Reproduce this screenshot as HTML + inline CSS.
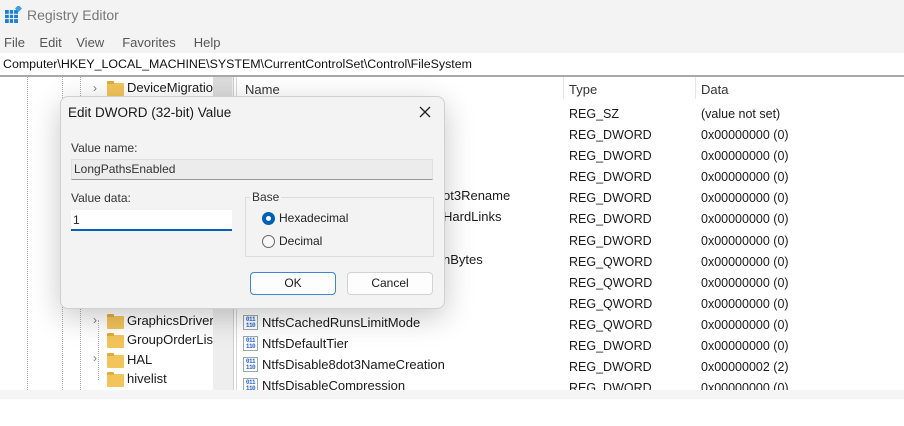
<!DOCTYPE html>
<html><head><meta charset="utf-8"><style>
*{margin:0;padding:0;box-sizing:border-box}
body{width:904px;height:426px;background:#fff;font-family:"Liberation Sans",sans-serif;position:relative;overflow:hidden;color:#1a1a1a}
.a{position:absolute;white-space:nowrap}
.t{font-size:13px}
.f{position:absolute;width:17px;height:13px;background:#f2c45a;border-radius:1px}
.f:before{content:"";position:absolute;left:0;top:-2px;width:7px;height:3px;background:#e3ab3a;border-radius:1px 1px 0 0}
.chev{position:absolute;font-size:12px;color:#777}
.ic{position:absolute;width:15px;height:15px;border:1px solid #9aa;background:#fff;font:bold 6px/6px "Liberation Mono",monospace;color:#2962c9;text-align:center;padding-top:1px;letter-spacing:-0.5px}
.dl{position:absolute;border-left:1px dotted #aaa}
</style></head><body>
<div class="a" style="left:0;top:0;width:904px;height:31px;background:#f3f3f3"></div>
<svg class="a" style="left:4px;top:6px" width="18" height="18" viewBox="0 0 18 18"><rect x="1" y="4" width="13" height="13" fill="#1f7fd1"/><g stroke="#f3f3f3" stroke-width="1"><line x1="5.3" y1="4" x2="5.3" y2="17"/><line x1="9.6" y1="4" x2="9.6" y2="17"/><line x1="1" y1="8.3" x2="14" y2="8.3"/><line x1="1" y1="12.6" x2="14" y2="12.6"/></g><rect x="12" y="0" width="5" height="5" fill="#3aa0e8" transform="rotate(45 14.5 2.5)"/></svg>
<div class="a" style="left:27px;top:7px;font-size:14px;color:#777">Registry Editor</div>
<div class="a" style="left:0;top:31px;width:904px;height:22px;background:#f3f3f3"></div>
<div class="a" style="left:4px;top:35px;font-size:13px;color:#555">File&nbsp;&nbsp;&nbsp;&nbsp;Edit&nbsp;&nbsp;&nbsp;&nbsp;View&nbsp;&nbsp;&nbsp;&nbsp;&nbsp;Favorites&nbsp;&nbsp;&nbsp;&nbsp;&nbsp;Help</div>
<div class="a" style="left:3px;top:57px;font-size:12.4px;color:#111">Computer\HKEY_LOCAL_MACHINE\SYSTEM\CurrentControlSet\Control\FileSystem</div>
<div class="a" style="left:0;top:75px;width:904px;height:2px;background:#a8a8a8"></div>
<div class="dl" style="left:27px;top:77px;height:313px"></div>
<div class="dl" style="left:62px;top:77px;height:313px"></div>
<div class="dl" style="left:80px;top:77px;height:313px"></div>
<div class="dl" style="left:98px;top:320px;height:60px"></div>
<div class="a" style="left:213px;top:77px;width:20px;height:313px;background:#eeeeee"></div>
<div class="a" style="left:213px;top:77px;width:19px;height:20px;background:#dcdcdc"></div>
<div class="a" style="left:233px;top:77px;width:1px;height:313px;background:#cfcfcf"></div>
<div class="a" style="left:236px;top:77px;width:1px;height:313px;background:#d8d8d8"></div>
<span class="chev" style="left:93px;top:81px">&#x203A;</span><div class="f" style="left:107px;top:83px"></div><div class="a t" style="left:127px;top:80px;width:86px;overflow:hidden">DeviceMigration</div>
<span class="chev" style="left:93px;top:313px">&#x203A;</span><div class="f" style="left:107px;top:316px"></div><div class="a t" style="left:127px;top:313px;width:86px;overflow:hidden">GraphicsDrivers</div>
<div class="f" style="left:107px;top:335px"></div><div class="a t" style="left:127px;top:332px;width:86px;overflow:hidden">GroupOrderList</div>
<span class="chev" style="left:93px;top:351px">&#x203A;</span><div class="f" style="left:107px;top:355px"></div><div class="a t" style="left:127px;top:352px">HAL</div>
<div class="f" style="left:107px;top:374px"></div><div class="a t" style="left:127px;top:371px">hivelist</div>
<div class="a t" style="left:245px;top:82px;color:#333">Name</div>
<div class="a" style="left:563px;top:77px;width:1px;height:22px;background:#e5e5e5"></div>
<div class="a t" style="left:569px;top:82px;color:#333">Type</div>
<div class="a" style="left:695px;top:77px;width:1px;height:22px;background:#e5e5e5"></div>
<div class="a t" style="left:701px;top:82px;color:#333">Data</div>
<div class="a" style="left:569px;top:104px;font-size:12.5px;line-height:21.1px">REG_SZ<br>REG_DWORD<br>REG_DWORD<br>REG_DWORD<br>REG_DWORD<br>REG_DWORD<br>REG_DWORD<br>REG_QWORD<br>REG_QWORD<br>REG_QWORD<br>REG_QWORD<br>REG_DWORD<br>REG_DWORD<br>REG_DWORD</div>
<div class="a" style="left:701px;top:104px;font-size:12.5px;line-height:21.1px">(value not set)<br>0x00000000 (0)<br>0x00000000 (0)<br>0x00000000 (0)<br>0x00000000 (0)<br>0x00000000 (0)<br>0x00000000 (0)<br>0x00000000 (0)<br>0x00000000 (0)<br>0x00000000 (0)<br>0x00000000 (0)<br>0x00000000 (0)<br>0x00000002 (2)<br>0x00000000 (0)</div>
<div class="a t" style="left:443px;top:188px">ot3Rename</div>
<div class="a t" style="left:443px;top:209px">HardLinks</div>
<div class="a t" style="left:443px;top:252px">nBytes</div>
<div class="ic" style="left:243px;top:315px">011<br>110</div><div class="a t" style="left:262px;top:315px">NtfsCachedRunsLimitMode</div>
<div class="ic" style="left:243px;top:336px">011<br>110</div><div class="a t" style="left:262px;top:336px">NtfsDefaultTier</div>
<div class="ic" style="left:243px;top:357px">011<br>110</div><div class="a t" style="left:262px;top:357px">NtfsDisable8dot3NameCreation</div>
<div class="ic" style="left:243px;top:378px">011<br>110</div><div class="a t" style="left:262px;top:378px">NtfsDisableCompression</div>
<div class="a" style="left:0;top:390px;width:904px;height:9px;background:#f5f5f5"></div>
<div class="a" style="left:0;top:399px;width:904px;height:27px;background:#fff"></div>
<div class="a" style="left:60px;top:96px;width:385px;height:213px;background:#f3f3f3;border:1px solid #d0d0d0;border-radius:8px;box-shadow:0 8px 30px rgba(0,0,0,0.22)"></div>
<div class="a" style="left:68px;top:105px;font-size:13.5px;color:#1a1a1a">Edit DWORD (32-bit) Value</div>
<svg class="a" style="left:419px;top:106px" width="12" height="12"><path d="M1 1L11 11M11 1L1 11" stroke="#222" stroke-width="1.3"/></svg>
<div class="a" style="left:71px;top:141px;font-size:12px;color:#333">Value name:</div>
<div class="a" style="left:71px;top:159px;width:362px;height:21px;background:#ececec;border:1px solid #e0e0e0;border-bottom:1px solid #9a9a9a"></div>
<div class="a" style="left:74px;top:162px;font-size:12px;color:#333">LongPathsEnabled</div>
<div class="a" style="left:71px;top:191px;font-size:12px;color:#333">Value data:</div>
<div class="a" style="left:71px;top:210px;width:161px;height:21px;background:#fff;border-bottom:2px solid #005fb8"></div>
<div class="a" style="left:73px;top:213px;font-size:12px;color:#222">1</div>
<div class="a" style="left:245px;top:197px;width:189px;height:60px;border:1px solid #dcdcdc"></div>
<div class="a" style="left:250px;top:190px;font-size:12px;color:#333;background:#f3f3f3;padding:0 2px">Base</div>
<div class="a" style="left:262px;top:212px;width:13px;height:13px;border-radius:50%;background:#005fb8"></div>
<div class="a" style="left:266px;top:216px;width:5px;height:5px;border-radius:50%;background:#fff"></div>
<div class="a" style="left:279px;top:211px;font-size:12px;color:#222">Hexadecimal</div>
<div class="a" style="left:262px;top:235px;width:13px;height:13px;border-radius:50%;border:1px solid #666;background:#f7f7f7"></div>
<div class="a" style="left:279px;top:234px;font-size:12px;color:#222">Decimal</div>
<div class="a" style="left:250px;top:272px;width:86px;height:23px;background:#fdfdfd;border:1px solid #3b87d6;border-radius:4px;text-align:center;font-size:12px;line-height:21px">OK</div>
<div class="a" style="left:347px;top:272px;width:86px;height:23px;background:#fdfdfd;border:1px solid #d2d2d2;border-radius:4px;text-align:center;font-size:12px;line-height:21px">Cancel</div>
</body></html>
